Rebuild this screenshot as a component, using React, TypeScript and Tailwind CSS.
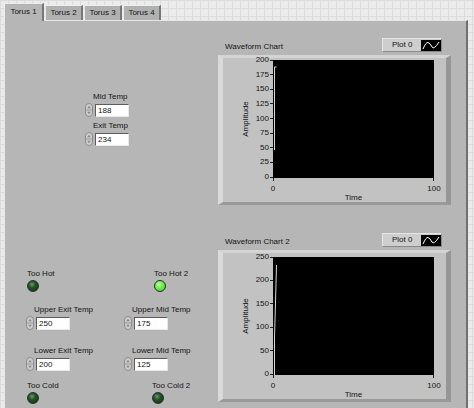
import React from "react";

const yTicks1 = [200, 175, 150, 125, 100, 75, 50, 25, 0];
const yTicks2 = [250, 200, 150, 100, 50, 0];

function Spinner() {
  return (
    <svg width="8" height="14" viewBox="0 0 8 14" className="shrink-0">
      <rect x="0.5" y="0.5" width="7" height="13" rx="3.5" fill="#cdcdcd" stroke="#8c8c8c" />
      <line x1="1" y1="7" x2="7" y2="7" stroke="#9a9a9a" />
      <path d="M2.2 5.2 L4 2.8 L5.8 5.2 Z" fill="#8a8a8a" />
      <path d="M2.2 8.8 L4 11.2 L5.8 8.8 Z" fill="#8a8a8a" />
    </svg>
  );
}

function NumCtl({ label, value }: { label: string; value: string }) {
  return (
    <div className="flex flex-col">
      <div className="h-[10px] whitespace-nowrap pl-[8px] leading-[10px]">{label}</div>
      <div className="mt-[1px] flex items-center gap-[2px]">
        <Spinner />
        <div className="h-[13px] w-[34px] border border-t-[#5c5c5c] border-l-[#5c5c5c] border-r-[#e8e8e8] border-b-[#e8e8e8] bg-white pl-[2px] leading-[11px]">
          {value}
        </div>
      </div>
    </div>
  );
}

function Led({ label, on, shift }: { label: string; on?: boolean; shift: string }) {
  return (
    <div className={`flex flex-col ${shift}`}>
      <div className="h-[10px] whitespace-nowrap leading-[10px]">{label}</div>
      <div
        className={`mt-[1px] h-[12px] w-[12px] rounded-full border border-[#2c2c2c] ${
          on
            ? "bg-[radial-gradient(circle_at_40%_35%,#e4ffd6_0%,#79fb55_30%,#34c41f_100%)]"
            : "bg-[radial-gradient(circle_at_40%_35%,#6f9a6f_0%,#24562a_35%,#0e2d10_100%)]"
        }`}
      />
    </div>
  );
}

function Legend() {
  return (
    <div className="flex h-[14px] w-[60px] items-center border border-t-[#e6e6e6] border-l-[#e6e6e6] border-r-[#8a8a8a] border-b-[#8a8a8a] bg-[#cecece]">
      <span className="ml-[9px] w-[29px] leading-none">Plot 0</span>
      <svg width="20" height="11" viewBox="0 0 20 11" className="bg-black">
        <path d="M2 9 Q5 2 7 2.5 Q9 3 11 7 Q13 10 18 2" fill="none" stroke="#ffffff" strokeWidth="1" />
      </svg>
    </div>
  );
}

function Chart({
  title,
  ticks,
  max,
  trace,
  frameH,
  plotTop,
}: {
  title: string;
  ticks: number[];
  max: number;
  trace: string;
  frameH: string;
  plotTop: string;
}) {
  return (
    <div className="flex w-[233px] flex-col">
      <div className="flex h-[17px] items-start justify-between">
        <span className="mt-[5px] pl-[7px] leading-none">{title}</span>
        <div className="mr-[9px]">
          <Legend />
        </div>
      </div>
      <div
        className={`flex flex-col border-l-[5px] border-t-[3px] border-r-[5px] border-b-[3px] border-l-[#dadada] border-t-[#d4d4d4] border-r-[#969696] border-b-[#9a9a9a] bg-[#c2c2c2] ${frameH}`}
      >
        <div className={`flex ${plotTop}`}>
          <div className="relative h-[118px] w-[50px]">
            <span className="absolute left-[23px] top-1/2 -translate-x-1/2 -translate-y-1/2 -rotate-90 whitespace-nowrap leading-none">
              Amplitude
            </span>
            {ticks.map((t) => (
              <div
                key={t}
                className="absolute right-0 flex items-center"
                style={{ top: `${(1 - t / max) * 117 - 4}px` }}
              >
                <span className="leading-[8px]">{t}</span>
                <span className="ml-[1px] h-px w-[3px] bg-[#222]" />
              </div>
            ))}
          </div>
          <div className="relative h-[118px] w-[161px] bg-black">
            <svg width="161" height="118" className="absolute left-0 top-0">
              <polyline points={trace} fill="none" stroke="#d8d8d8" strokeWidth="1" />
            </svg>
          </div>
        </div>
        <div className="relative ml-[50px] h-[16px] w-[161px]">
          <span className="absolute left-0 top-0 h-[3px] w-px bg-[#222]" />
          <span className="absolute right-0 top-0 h-[3px] w-px bg-[#222]" />
          <span className="absolute left-0 top-[6px] -translate-x-1/2 leading-[9px]">0</span>
          <span className="absolute right-0 top-[6px] translate-x-1/2 leading-[9px]">100</span>
        </div>
        <div className="ml-[50px] mt-[1px] w-[161px] text-center leading-[9px]">Time</div>
      </div>
    </div>
  );
}

function Tab({ label, active }: { label: string; active?: boolean }) {
  return (
    <div
      className={`flex items-center justify-center border-l border-t border-r-2 border-l-[#ececec] border-t-[#ececec] border-r-[#777777] leading-none ${
        active ? "-mb-px h-[18px] w-[40px] bg-[#b6b6b6] pb-[2px]" : "h-[15px] w-[38px] bg-[#b1b1b1]"
      }`}
    >
      {label}
    </div>
  );
}

export default function App() {
  return (
    <div className="h-[408px] w-[474px] overflow-hidden bg-[#ebebeb] bg-[linear-gradient(to_right,#dcdcdc_1px,transparent_1px),linear-gradient(to_bottom,#dcdcdc_1px,transparent_1px)] bg-[size:8px_8px] pt-[3px] font-['Liberation_Sans',Arial,sans-serif] text-[8px] text-[#141414]">
      <div className="relative z-10 flex h-[17px] items-end gap-[1px] pl-[4px]">
        <Tab label="Torus 1" active />
        <Tab label="Torus 2" />
        <Tab label="Torus 3" />
        <Tab label="Torus 4" />
      </div>
      <div className="ml-[4px] flex h-[400px] w-[464px] border-l border-t border-r-2 border-l-[#e6e6e6] border-t-[#e6e6e6] border-r-[#6e6e6e] bg-[#b6b6b6]">
        <div className="flex w-[213px] flex-col">
          <div className="ml-[80px] mt-[71px] flex flex-col gap-[4px]">
            <NumCtl label="Mid Temp" value="188" />
            <NumCtl label="Exit Temp" value="234" />
          </div>
          <div className="ml-[21px] mt-[123px] flex flex-col">
            <div className="flex">
              <div className="w-[98px]">
                <Led label="Too Hot" shift="ml-[1px]" />
              </div>
              <Led label="Too Hot 2" on shift="ml-[30px]" />
            </div>
            <div className="mt-[13px] flex">
              <div className="w-[98px]">
                <NumCtl label="Upper Exit Temp" value="250" />
              </div>
              <NumCtl label="Upper Mid Temp" value="175" />
            </div>
            <div className="mt-[16px] flex">
              <div className="w-[98px]">
                <NumCtl label="Lower Exit Temp" value="200" />
              </div>
              <NumCtl label="Lower Mid Temp" value="125" />
            </div>
            <div className="mt-[10px] flex">
              <div className="w-[98px]">
                <Led label="Too Cold" shift="ml-[1px]" />
              </div>
              <Led label="Too Cold 2" shift="ml-[28px]" />
            </div>
          </div>
        </div>
        <div className="mt-[17px] flex flex-col">
          <Chart
            title="Waveform Chart"
            ticks={yTicks1}
            max={200}
            trace="3.5,7 1.5,7 1.5,90"
            frameH="h-[150px]"
            plotTop="mt-[2px]"
          />
          <div className="mt-[28px]">
            <Chart
              title="Waveform Chart 2"
              ticks={yTicks2}
              max={250}
              trace="1.5,118 1.5,80 2.5,45 3.5,8"
              frameH="h-[152px]"
              plotTop="mt-[4px]"
            />
          </div>
        </div>
      </div>
    </div>
  );
}
